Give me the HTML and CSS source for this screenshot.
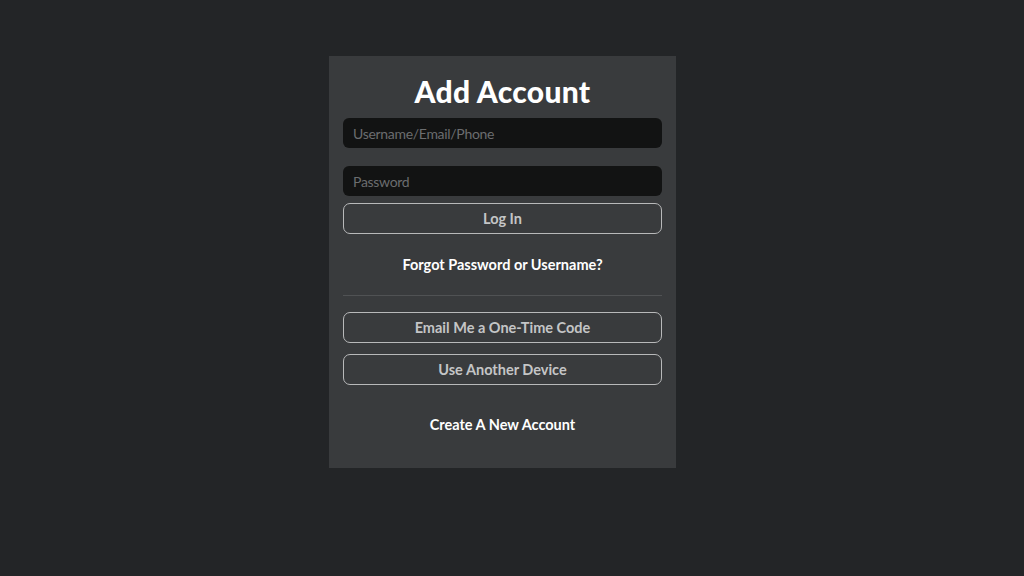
FILE: index.html
```html
<!DOCTYPE html>
<html lang="en">
<head>
<meta charset="utf-8">
<title>Add Account</title>
<link rel="stylesheet" href="styles.css">
</head>
<body>
<main class="page">
  <section class="card">
    <h1 class="title">Add Account</h1>
    <div class="field field-user"><input class="input" type="text" placeholder="Username/Email/Phone"></div>
    <div class="field field-pass"><input class="input" type="password" placeholder="Password"></div>
    <button class="btn btn-login">Log In</button>
    <a class="link forgot">Forgot Password or Username?</a>
    <hr class="divider">
    <button class="btn">Email Me a One-Time Code</button>
    <button class="btn btn-device">Use Another Device</button>
    <a class="link create">Create A New Account</a>
  </section>
</main>
</body>
</html>
```
FILE: styles.css
```css
html, body {
  margin: 0;
  padding: 0;
  background: #232527;
  font-family: Lato, "Noto Sans", "Liberation Sans", sans-serif;
}
.page {
  width: 1024px;
  height: 576px;
  box-sizing: border-box;
  padding: 56px 0 0 329px;
  display: flex;
  align-items: flex-start;
}
.card {
  width: 347px;
  box-sizing: border-box;
  padding: 18px 14px 33px;
  background: #393b3d;
  display: flex;
  flex-direction: column;
  align-items: stretch;
}
.title {
  margin: 0 0 4px;
  height: 40px;
  line-height: 35px;
  text-align: center;
  color: #ffffff;
  font-size: 30px;
  font-weight: 900;
  letter-spacing: 0.3px;
}
.field { display: flex; }
.field-pass { margin-top: 18px; }
.input {
  flex: 1;
  height: 30px;
  box-sizing: border-box;
  border: none;
  border-radius: 6px;
  background: #121313;
  padding: 0 10px;
  font-family: inherit;
  font-size: 14px;
  color: #fff;
  outline: none;
}
.input::placeholder { color: #6b6d6f; letter-spacing: -0.3px; }
.btn {
  height: 31px;
  box-sizing: border-box;
  border: 1px solid #b8b9ba;
  border-radius: 7px;
  background: transparent;
  color: #c4c5c6;
  font-family: inherit;
  font-size: 14.5px;
  font-weight: 700;
  cursor: pointer;
}
.btn-login { margin-top: 7px; }
.btn-device { margin-top: 11px; }
.link {
  display: block;
  text-align: center;
  color: #ffffff;
  font-size: 14.5px;
  font-weight: 700;
  line-height: 20px;
}
.forgot { margin-top: 21px; }
.divider {
  margin: 20px 0 16px;
  border: none;
  height: 1px;
  background: #505254;
}
.create { margin-top: 30px; }
```
